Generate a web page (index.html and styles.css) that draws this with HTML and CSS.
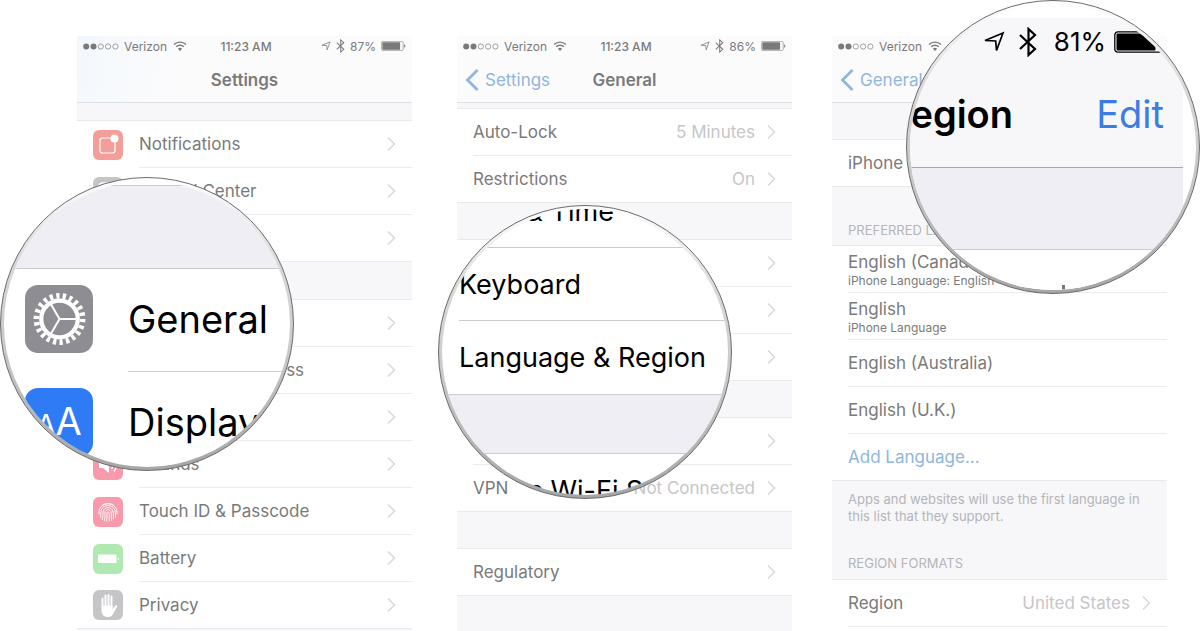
FILE: index.html
```
<!DOCTYPE html>
<html lang="en">
<head>
    <meta charset="UTF-8">
    <meta name="viewport" content="width=device-width, initial-scale=1.0">
    <title>Change language and region</title>
    <link rel="stylesheet" href="styles.css">
</head>
<body>

    <!-- Shared icons -->
    <svg class="sprite" aria-hidden="true">
        <symbol id="chevron" viewBox="0 0 9 16"><path d="M1 1.500l6.500 6.500L1 14.500" fill="none" stroke="currentColor" stroke-width="1.600"/></symbol>
        <symbol id="back" viewBox="0 0 14 22"><path d="M12.500 1L2.500 11l10 10" fill="none" stroke="currentColor" stroke-width="2.800"/></symbol>
        <symbol id="signal" viewBox="0 0 36 7">
            <circle cx="3.200" cy="3.500" r="3" fill="currentColor"/>
            <circle cx="10.500" cy="3.500" r="3" fill="currentColor"/>
            <g fill="none" stroke="currentColor" stroke-width=".7"><circle cx="17.800" cy="3.500" r="2.600"/><circle cx="25.100" cy="3.500" r="2.600"/><circle cx="32.400" cy="3.500" r="2.600"/></g>
        </symbol>
        <symbol id="wifi" viewBox="0 0 14 10">
            <path d="M1 3.600a8.500 8.500 0 0 1 12 0M3.200 5.800a5.400 5.400 0 0 1 7.600 0" fill="none" stroke="currentColor" stroke-width="1.400"/>
            <path d="M7 10L4.900 7.800a3 3 0 0 1 4.200 0z" fill="currentColor"/>
        </symbol>
        <symbol id="location" viewBox="0 0 22 22"><path d="M20 2L13.500 19.500l-.8-9.500L2 9.500z" fill="none" stroke="currentColor" stroke-width="1.700" stroke-linejoin="miter"/></symbol>
        <symbol id="bluetooth" viewBox="0 0 18 30"><path d="M1 8l15 14-6.500 6V2L16 8 1 22" fill="none" stroke="currentColor" stroke-width="2.200"/></symbol>
        <symbol id="battery" viewBox="0 0 54 22">
            <rect x=".8" y=".8" width="47.500" height="20.400" rx="3" fill="none" stroke="currentColor" stroke-width="1.300"/>
            <rect x="2.500" y="2.500" width="39" height="17" rx="1" fill="currentColor"/>
            <path d="M50.500 7c3.500 1 3.500 7 0 8z" fill="currentColor"/>
        </symbol>
        <symbol id="gear" viewBox="0 0 67 67">
            <g fill="none" stroke="#fff">
                <circle cx="34" cy="33.500" r="22.800" stroke-width="5.500" pathLength="44" stroke-dasharray="1 1"/>
                <circle cx="34" cy="33.500" r="18" stroke-width="4.200"/>
                <path d="M52 33.500H34L25 18M34 33.500L25 49" stroke-width="2"/>
            </g>
        </symbol>
        <symbol id="bell" viewBox="0 0 30 30">
            <path d="M18 8h-8.500Q7 8 7 10.500v10Q7 23 9.500 23h10q2.500 0 2.500-2.500V12" fill="none" stroke="#fff" stroke-width="1.200"/>
            <circle cx="21.500" cy="8.500" r="4" fill="#fff"/>
        </symbol>
        <symbol id="toggles" viewBox="0 0 30 30"><g fill="none" stroke="#fff" stroke-width="1.500"><rect x="6" y="6" width="18" height="7.500" rx="3.700"/><rect x="6" y="16.500" width="18" height="7.500" rx="3.700"/><circle cx="9.800" cy="9.800" r="2"/><circle cx="20.200" cy="20.200" r="2"/></g></symbol>
        <symbol id="moon" viewBox="0 0 30 30"><path d="M13 6a9 9 0 1 0 11 12A9 9 0 0 1 13 6z" fill="#fff"/></symbol>
        <symbol id="flower" viewBox="0 0 30 30"><g fill="none" stroke="#fff" stroke-width="1.500"><circle cx="15" cy="15" r="3"/><circle cx="15" cy="15" r="8" stroke-dasharray="5 1.300"/></g></symbol>
        <symbol id="speaker" viewBox="0 0 30 30"><path d="M6 12h4l6-5v16l-6-5H6z" fill="#fff"/><path d="M18.500 11a6 6 0 0 1 0 8M21 8.500a10 10 0 0 1 0 13" fill="none" stroke="#fff" stroke-width="1.400"/></symbol>
        <symbol id="finger" viewBox="0 0 30 30">
            <g fill="none" stroke="#fff" stroke-width=".9" stroke-linecap="round">
                <path d="M9 8.500a9 9 0 0 1 12 0M6 17c-.3-3 .3-5.500 2-7.200 4-4 10-4 14 0 1.700 2 2.300 4.500 2 7.200"/>
                <path d="M7.500 20.500c.8-4-.5-6 1.500-9 3.500-4 9-4 12 0 2 3 1 5 1.500 8.500"/>
                <path d="M9.300 22.500c1.500-4-.3-7 1.500-9.700 2.500-3 6.200-3 8.500 0 1.700 3 .7 5.700 1.200 9"/>
                <path d="M11.300 23.800c1.500-4.500 0-7 1-9.500 1.500-2 4-2 5.500 0 1 3 .5 6 .6 9"/>
                <path d="M13.500 24.300c1-3 .3-6 .5-8.500.5-1 1.500-1 2 0 .4 3 .4 6 .2 8.500"/>
            </g>
        </symbol>
        <symbol id="cell" viewBox="0 0 30 30"><rect x="5" y="10.500" width="18.500" height="8.500" rx=".8" fill="#fff"/><path d="M24.800 13.200c1.600.5 1.600 2.600 0 3.100z" fill="#fff"/></symbol>
        <symbol id="hand" viewBox="0 0 30 30">
            <g stroke="#fff" stroke-width="1.900" stroke-linecap="round"><path d="M9.500 8.500v9M12.500 5.500v12M15.500 5v12M18.500 6.500v11"/></g>
            <path d="M8.500 15.500h11v3.700l2.800-3.500c.8-.8 2.300-.3 1.800.9l-3.600 6.600c-1.400 2.800-3 3.800-5.700 3.800-4 0-6.300-2.500-6.300-6.500z" fill="#fff"/>
        </symbol>
    </svg>

    <main class="phones">

        <!-- Settings -->
        <section class="phone phone-settings">
            <div class="screen">
                <header class="bar">
                    <div class="status">
                        <div class="status-side">
                            <svg class="i-signal"><use href="#signal"/></svg><span>Verizon</span><svg class="i-wifi"><use href="#wifi"/></svg>
                        </div>
                        <span class="time">11:23 AM</span>
                        <div class="status-side status-right">
                            <svg class="i-location"><use href="#location"/></svg><svg class="i-bluetooth"><use href="#bluetooth"/></svg><span>87%</span><svg class="i-battery"><use href="#battery"/></svg>
                        </div>
                    </div>
                    <div class="nav">
                        <h1>Settings</h1>
                    </div>
                </header>
                <div class="gap gap-first"></div>
                <div class="group">
                    <a class="row" href="#"><svg class="tile red"><use href="#bell"/></svg><span class="row-body">Notifications<svg class="i-chevron"><use href="#chevron"/></svg></span></a>
                    <a class="row" href="#"><svg class="tile gray"><use href="#toggles"/></svg><span class="row-body">Control Center<svg class="i-chevron"><use href="#chevron"/></svg></span></a>
                    <a class="row" href="#"><svg class="tile purple"><use href="#moon"/></svg><span class="row-body">Do Not Disturb<svg class="i-chevron"><use href="#chevron"/></svg></span></a>
                </div>
                <div class="gap"></div>
                <div class="group">
                    <a class="row" href="#"><svg class="tile gray"></svg><span class="row-body">General<svg class="i-chevron"><use href="#chevron"/></svg></span></a>
                    <a class="row" href="#"><svg class="tile blue"></svg><span class="row-body">Display &amp; Brightness<svg class="i-chevron"><use href="#chevron"/></svg></span></a>
                    <a class="row" href="#"><svg class="tile cyan"><use href="#flower"/></svg><span class="row-body">Wallpaper<svg class="i-chevron"><use href="#chevron"/></svg></span></a>
                    <a class="row" href="#"><svg class="tile pink"><use href="#speaker"/></svg><span class="row-body">Sounds<svg class="i-chevron"><use href="#chevron"/></svg></span></a>
                    <a class="row" href="#"><svg class="tile pink"><use href="#finger"/></svg><span class="row-body">Touch ID &amp; Passcode<svg class="i-chevron"><use href="#chevron"/></svg></span></a>
                    <a class="row" href="#"><svg class="tile green"><use href="#cell"/></svg><span class="row-body">Battery<svg class="i-chevron"><use href="#chevron"/></svg></span></a>
                    <a class="row" href="#"><svg class="tile gray"><use href="#hand"/></svg><span class="row-body">Privacy<svg class="i-chevron"><use href="#chevron"/></svg></span></a>
                </div>
            </div>

            <div class="lens">
                <div class="glass">
                    <div class="zoom-gap"></div>
                    <div class="zoom-row"><svg class="zoom-tile gray-full"><use href="#gear"/></svg><span class="zoom-body">General</span></div>
                    <div class="zoom-row"><span class="zoom-tile blue-full"><span class="small-a">A</span><span>A</span></span><span class="zoom-body">Display</span></div>
                </div>
            </div>
        </section>

        <!-- General -->
        <section class="phone phone-general">
            <div class="screen">
                <header class="bar">
                    <div class="status">
                        <div class="status-side">
                            <svg class="i-signal"><use href="#signal"/></svg><span>Verizon</span><svg class="i-wifi"><use href="#wifi"/></svg>
                        </div>
                        <span class="time">11:23 AM</span>
                        <div class="status-side status-right">
                            <svg class="i-location"><use href="#location"/></svg><svg class="i-bluetooth"><use href="#bluetooth"/></svg><span>86%</span><svg class="i-battery"><use href="#battery"/></svg>
                        </div>
                    </div>
                    <div class="nav">
                        <a class="back" href="#"><svg class="i-back"><use href="#back"/></svg>Settings</a>
                        <h1>General</h1>
                    </div>
                </header>
                <div class="gap gap-first"></div>
                <div class="group">
                    <a class="row" href="#"><span class="row-body">Auto-Lock<span class="value">5 Minutes</span><svg class="i-chevron"><use href="#chevron"/></svg></span></a>
                    <a class="row" href="#"><span class="row-body">Restrictions<span class="value">On</span><svg class="i-chevron"><use href="#chevron"/></svg></span></a>
                </div>
                <div class="gap"></div>
                <div class="group">
                    <a class="row" href="#"><span class="row-body">Date &amp; Time<svg class="i-chevron"><use href="#chevron"/></svg></span></a>
                    <a class="row" href="#"><span class="row-body">Keyboard<svg class="i-chevron"><use href="#chevron"/></svg></span></a>
                    <a class="row" href="#"><span class="row-body">Language &amp; Region<svg class="i-chevron"><use href="#chevron"/></svg></span></a>
                </div>
                <div class="gap"></div>
                <div class="group">
                    <a class="row" href="#"><span class="row-body">iTunes Wi-Fi Sync<svg class="i-chevron"><use href="#chevron"/></svg></span></a>
                    <a class="row" href="#"><span class="row-body">VPN<span class="value">Not Connected</span><svg class="i-chevron"><use href="#chevron"/></svg></span></a>
                </div>
                <div class="gap"></div>
                <div class="group">
                    <a class="row" href="#"><span class="row-body">Regulatory<svg class="i-chevron"><use href="#chevron"/></svg></span></a>
                </div>
            </div>

            <div class="lens">
                <div class="glass">
                    <div class="zoom-row cut-top"><span class="zoom-body">Date &amp; Time</span></div>
                    <div class="zoom-row"><span class="zoom-body">Keyboard</span></div>
                    <div class="zoom-row"><span class="zoom-body">Language &amp; Region</span></div>
                    <div class="zoom-gap"></div>
                    <div class="zoom-row"><span class="zoom-body">iTunes Wi-Fi Sync</span></div>
                </div>
            </div>
        </section>

        <!-- Language & Region -->
        <section class="phone phone-language">
            <div class="screen">
                <header class="bar">
                    <div class="status">
                        <div class="status-side">
                            <svg class="i-signal"><use href="#signal"/></svg><span>Verizon</span><svg class="i-wifi"><use href="#wifi"/></svg>
                        </div>
                    </div>
                    <div class="nav">
                        <a class="back" href="#"><svg class="i-back"><use href="#back"/></svg>General</a>
                    </div>
                </header>
                <div class="gap"></div>
                <div class="group">
                    <a class="row" href="#"><span class="row-body">iPhone Language</span></a>
                </div>
                <h2 class="label label-first">Preferred Language Order</h2>
                <div class="group">
                    <div class="row"><span class="row-body stacked">English (Canada)<small>iPhone Language: English</small></span></div>
                    <div class="row"><span class="row-body stacked">English<small>iPhone Language</small></span></div>
                    <div class="row"><span class="row-body">English (Australia)</span></div>
                    <div class="row"><span class="row-body">English (U.K.)</span></div>
                    <a class="row link" href="#"><span class="row-body">Add Language...</span></a>
                </div>
                <div class="notes">
                    <p>Apps and websites will use the first language in this list that they support.</p>
                    <h2 class="label">Region Formats</h2>
                </div>
                <div class="group group-rest">
                    <a class="row" href="#"><span class="row-body">Region<span class="value">United States</span><svg class="i-chevron"><use href="#chevron"/></svg></span></a>
                    <div class="row"></div>
                </div>
            </div>

            <div class="lens">
                <div class="glass">
                    <div class="zoom-screen">
                        <div class="zoom-status">
                            <svg class="z-location"><use href="#location"/></svg><svg class="z-bluetooth"><use href="#bluetooth"/></svg><span>81%</span><svg class="z-battery"><use href="#battery"/></svg>
                        </div>
                        <div class="zoom-nav">
                            <strong>Region</strong>
                            <button type="button">Edit</button>
                        </div>
                        <div class="zoom-gap"></div>
                        <div class="zoom-row"><span class="tick"></span></div>
                    </div>
                </div>
            </div>
        </section>

    </main>

</body>
</html>
```
FILE: styles.css
```
* {
    box-sizing: border-box;
}

body {
    margin: 0;
    background-color: #fff;
    font-family: Inter, Roboto, "Liberation Sans", sans-serif;
    font-size: 17px;
    color: #7a7a7a;
}

a {
    color: inherit;
    text-decoration: none;
}

h1, h2, p {
    margin: 0;
}

svg {
    flex: none;
}

.sprite {
    position: absolute;
    width: 0;
    height: 0;
}

.phones {
    display: flex;
    height: 100vh;
    padding: 36px 33px 0 77px;
    overflow: hidden;
}

.phone {
    position: relative;
    flex: 1;
    min-width: 0;
}

.phone-general {
    margin-left: 45px;
}

.phone-language {
    margin-left: 40px;
}

.screen {
    display: flex;
    flex-direction: column;
    height: 100%;
    overflow: hidden;
    background-color: #f7f7fa;
}

/* Status bar and title */
.bar {
    flex: none;
    height: 67px;
    border-bottom: 1px solid #dfdfe5;
    background-color: #fbfbfc;
}

.phone-settings .bar {
    background-image: linear-gradient(100deg, #f3f8fd, #fbfbfc 30%);
}

.status {
    display: flex;
    align-items: center;
    height: 20px;
    padding: 0 6px;
    font-size: 12px;
}

.status-side {
    display: flex;
    flex: 1;
    align-items: center;
    gap: 5px;
}

.status-right {
    justify-content: flex-end;
}

.time {
    padding-left: 3px;
    font-weight: 500;
}

.i-signal {
    width: 36px;
    height: 7px;
}

.i-wifi {
    width: 14px;
    height: 10px;
    margin-left: 1px;
}

.i-location {
    width: 10px;
    height: 10px;
}

.i-bluetooth {
    width: 9px;
    height: 14px;
}

.i-battery {
    width: 25px;
    height: 10px;
}

.nav {
    position: relative;
    display: flex;
    align-items: center;
    justify-content: center;
    height: 47px;
}

.nav h1 {
    font-size: 17px;
    font-weight: 600;
}

.back {
    position: absolute;
    left: 8px;
    display: flex;
    align-items: center;
    gap: 6px;
    color: #8fb6e0;
}

.i-back {
    width: 14px;
    height: 22px;
}

/* Lists */
.gap {
    flex: none;
    height: 36px;
}

.phone-settings .gap {
    height: 37px;
}

.phone-settings .gap-first {
    height: 17px;
}

.phone-general .gap-first {
    height: 5px;
}

.group {
    flex: none;
    border-top: 1px solid #e9e9ec;
    background-color: #fff;
}

.group-rest {
    flex: 1 0 auto;
}

.row {
    display: flex;
    align-items: center;
    height: 47px;
    padding-left: 16px;
}

.row-body {
    display: flex;
    flex: 1;
    align-items: center;
    height: 100%;
    padding-right: 16px;
    border-bottom: 1px solid #ececee;
    white-space: nowrap;
}

.row:last-child {
    border-bottom: 1px solid #e9e9ec;
}

.row:last-child .row-body {
    border-bottom: 0;
}

.row-body.stacked {
    flex-direction: column;
    align-items: flex-start;
    justify-content: flex-end;
    padding-bottom: 3px;
    line-height: 20px;
}

.stacked small {
    font-size: 12px;
    line-height: 17px;
}

.value {
    margin-left: auto;
    color: #c6c6c9;
}

.i-chevron {
    width: 9px;
    height: 16px;
    margin-left: auto;
    color: #dadade;
}

.value + .i-chevron {
    margin-left: 12px;
}

.link {
    color: #8fb6e0;
}

.tile {
    width: 30px;
    height: 30px;
    margin-right: 16px;
    border-radius: 6px;
}

.red { background-color: #f39e99; }
.gray { background-color: #c5c5c8; }
.purple { background-color: #abaae8; }
.blue { background-color: #93bdf8; }
.cyan { background-color: #9fdcf3; }
.pink { background-color: #f79bac; }
.green { background-color: #b0e8b1; }

.label {
    font-size: 13px;
    font-weight: 400;
    line-height: 16px;
    text-transform: uppercase;
    color: #b5b5b8;
}

.label-first {
    flex: none;
    height: 58px;
    padding: 35px 16px 0;
}

.notes {
    flex: none;
    height: 98px;
    padding: 10px 16px 0;
    font-size: 13px;
    line-height: 17px;
    color: #b5b5b8;
}

.notes .label {
    margin-top: 30px;
}

/* Magnifier */
.lens {
    position: absolute;
    width: 294px;
    height: 294px;
    padding: 3px;
    border: 1px solid #6b6b6b;
    border-radius: 50%;
    background-image: linear-gradient(#fff, #d8d8d8 30%, #c8c8c8 60%, #a6a6a6);
    color: #000;
}

.phone-settings .lens {
    top: 141px;
    left: -77px;
}

.phone-general .lens {
    top: 169px;
    left: -19px;
}

.phone-language .lens {
    top: -36px;
    right: -33px;
}

.glass {
    height: 100%;
    overflow: hidden;
    border-radius: 50%;
    background-color: #fff;
}

.zoom-gap {
    border: solid #cbcbce;
    border-width: 1px 0;
    background-color: #efeef5;
}

.zoom-row {
    display: flex;
    align-items: center;
    white-space: nowrap;
}

.zoom-body {
    display: flex;
    flex: 1;
    align-items: center;
    height: 100%;
    border-bottom: 1px solid #cbcbce;
}

.phone-settings .glass {
    padding-top: 4px;
    font-size: 38px;
}

.phone-settings .zoom-gap {
    height: 84px;
}

.phone-settings .zoom-row {
    height: 103px;
    padding-left: 21px;
}

.phone-settings .zoom-body {
    padding-bottom: 2px;
}

.zoom-tile {
    display: flex;
    flex: none;
    align-items: baseline;
    justify-content: center;
    width: 68px;
    height: 68px;
    margin: 0 35px 4px 0;
    border-radius: 13px;
    color: #fff;
    line-height: 66px;
}

.small-a {
    font-size: 28px;
}

.gray-full { background-color: #8e8d93; }
.blue-full { background-color: #2f7bf6; }

.phone-general .glass {
    font-size: 27px;
}

.phone-general .zoom-row {
    height: 73px;
    padding-left: 17px;
}

.phone-general .cut-top {
    height: 39px;
    align-items: flex-end;
}

.phone-general .cut-top .zoom-body {
    height: 73px;
    flex: 1 0 auto;
}

.phone-general .zoom-row:has(+ .zoom-gap) .zoom-body {
    border-bottom: 0;
}

.phone-general .zoom-gap {
    height: 60px;
}

.phone-language .glass {
    padding: 14px 13px 0 0;
}

.zoom-screen {
    background-color: #f7f7f9;
}

.zoom-status {
    display: flex;
    align-items: center;
    justify-content: flex-end;
    height: 47px;
    padding-right: 15px;
    font-size: 26px;
}

.z-location {
    width: 22px;
    height: 22px;
    margin-right: 14px;
}

.z-bluetooth {
    width: 18px;
    height: 30px;
    margin-right: 17px;
}

.z-battery {
    width: 54px;
    height: 22px;
    margin-left: 8px;
}

.zoom-nav {
    display: flex;
    align-items: center;
    justify-content: space-between;
    height: 102px;
    padding: 0 19px 4px 0;
    font-size: 38px;
}

.zoom-nav strong {
    width: 103px;
    direction: rtl;
    font-weight: 600;
}

.zoom-nav button {
    padding: 0;
    border: 0;
    background: none;
    font: inherit;
    color: #3b7de0;
}

.phone-language .zoom-gap {
    height: 83px;
    border-top-color: #a9a9ad;
}

.phone-language .zoom-row {
    height: 60px;
    align-items: flex-start;
    justify-content: center;
    padding: 35px 0 0 34px;
    background-color: #fff;
}

.tick {
    width: 3px;
    height: 6px;
    background-color: #777;
}
```
